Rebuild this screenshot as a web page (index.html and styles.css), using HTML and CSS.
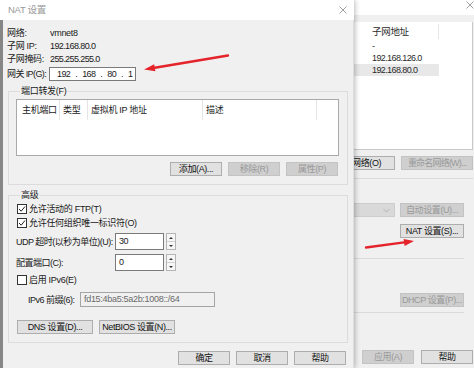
FILE: index.html
```html
<!DOCTYPE html>
<html lang="zh-CN">
<head>
    <meta charset="UTF-8">
    <meta name="viewport" content="width=device-width, initial-scale=1.0">
    <title>NAT 设置</title>
    <link rel="stylesheet" href="styles.css">
</head>
<body>
    <div class="desk">
        <!-- Window behind: virtual network editor -->
        <div class="win back">
            <div class="back-title">
                <svg class="close" width="8" height="8" viewBox="0 0 8 8"><path d="M0.5 0.5 L7.5 7.5 M7.5 0.5 L0.5 7.5" stroke="#888" stroke-width="0.8"/></svg>
            </div>
            <div class="back-body">
                <div class="netlist">
                    <div class="nl-row nl-head"><span class="nl-c1"></span><span class="nl-c2">子网地址</span></div>
                    <div class="nl-row"><span class="nl-c1"></span><span class="nl-c2">-</span></div>
                    <div class="nl-row"><span class="nl-c1"></span><span class="nl-c2 num">192.168.126.0</span></div>
                    <div class="nl-row sel"><span class="nl-c1"></span><span class="nl-c2 num">192.168.80.0</span></div>
                </div>
                <div class="row-end">
                    <button class="btn w-net">移除网络(O)</button>
                    <button class="btn off w-rename">重命名网络(W)...</button>
                </div>
                <div class="sep sep-full"></div>
                <div class="row-end combo-row">
                    <div class="combo">
                        <svg width="7" height="5" viewBox="0 0 7 5"><path d="M0.5 1 L3.5 4 L6.5 1" fill="none" stroke="#aaa" stroke-width="0.8"/></svg>
                    </div>
                    <button class="btn off w-side">自动设置(U)...</button>
                </div>
                <div class="row-end nat-row">
                    <button class="btn w-side">NAT 设置(S)...</button>
                </div>
                <div class="sep sep-short sep-a"></div>
                <div class="row-end dhcp-row">
                    <button class="btn off w-side">DHCP 设置(P)...</button>
                </div>
                <div class="sep sep-short sep-b"></div>
                <div class="row-end back-foot">
                    <button class="btn off w-foot">应用(A)</button>
                    <button class="btn w-foot">帮助</button>
                </div>
            </div>
        </div>

        <!-- Front dialog: NAT settings -->
        <div class="win dlg">
            <div class="dlg-title">
                <span>NAT 设置</span>
                <svg class="close" width="8" height="8" viewBox="0 0 8 8"><path d="M0.5 0.5 L7.5 7.5 M7.5 0.5 L0.5 7.5" stroke="#888" stroke-width="0.8"/></svg>
            </div>
            <div class="dlg-body">
                <div class="info">
                    <span class="lbl">网络:</span><span>vmnet8</span>
                    <span class="lbl">子网 IP:</span><span class="num">192.168.80.0</span>
                    <span class="lbl">子网掩码:</span><span class="num">255.255.255.0</span>
                    <span class="lbl gw-lbl">网关 IP(G):</span>
                    <div class="ipbox num"><span>192</span><span>.</span><span>168</span><span>.</span><span>80</span><span>.</span><span>1</span></div>
                </div>

                <fieldset class="group pf">
                    <legend>端口转发(F)</legend>
                    <div class="plist">
                        <div class="pl-head">
                            <span>主机端口</span>
                            <span>类型</span>
                            <span>虚拟机 IP 地址</span>
                            <span>描述</span>
                        </div>
                    </div>
                    <div class="btn-row">
                        <button class="btn w-52">添加(A)...</button>
                        <button class="btn off w-52">移除(R)</button>
                        <button class="btn off w-52">属性(P)</button>
                    </div>
                </fieldset>

                <fieldset class="group adv">
                    <legend>高级</legend>
                    <div class="chk chk-1">
                        <span class="box"><svg width="8" height="8" viewBox="0 0 8 8"><path d="M1 4 L3.2 6.2 L7 1.5" fill="none" stroke="#222" stroke-width="1"/></svg></span>
                        <span>允许活动的 FTP(T)</span>
                    </div>
                    <div class="chk">
                        <span class="box"><svg width="8" height="8" viewBox="0 0 8 8"><path d="M1 4 L3.2 6.2 L7 1.5" fill="none" stroke="#222" stroke-width="1"/></svg></span>
                        <span>允许任何组织唯一标识符(O)</span>
                    </div>
                    <div class="field udp">
                        <span class="f-lbl">UDP 超时(以秒为单位)(U):</span>
                        <span class="spin-input num">30</span>
                        <span class="spin"><span class="up"></span><span class="dn"></span></span>
                    </div>
                    <div class="field port">
                        <span class="f-lbl">配置端口(C):</span>
                        <span class="spin-input num">0</span>
                        <span class="spin"><span class="up"></span><span class="dn"></span></span>
                    </div>
                    <div class="chk chk-v6">
                        <span class="box"></span>
                        <span>启用 IPv6(E)</span>
                    </div>
                    <div class="prefix">
                        <span class="p-lbl">IPv6 前缀(6):</span>
                        <span class="p-input">fd15:4ba5:5a2b:1008::/64</span>
                    </div>
                    <div class="btn-row left">
                        <button class="btn w-76">DNS 设置(D)...</button>
                        <button class="btn w-76">NetBIOS 设置(N)...</button>
                    </div>
                </fieldset>

                <div class="btn-row dlg-foot">
                    <button class="btn w-52">确定</button>
                    <button class="btn w-52">取消</button>
                    <button class="btn w-52">帮助</button>
                </div>
            </div>
        </div>

        <!-- Red annotation arrows -->
        <svg class="marks" width="474" height="368" viewBox="0 0 474 368">
            <line x1="228" y1="55.5" x2="154.8" y2="67.7" stroke="#e4232b" stroke-width="2.4" stroke-linecap="round"/>
            <polygon points="144,69.5 155.4,71.2 154.2,64.2" fill="#e4232b"/>
            <line x1="366" y1="247.5" x2="404.1" y2="242.4" stroke="#e4232b" stroke-width="2.4" stroke-linecap="round"/>
            <polygon points="414,241 404.6,245.9 403.6,238.9" fill="#e4232b"/>
        </svg>
    </div>
</body>
</html>
```

FILE: styles.css
```css
/* Two overlapping Windows dialogs */
body {
    margin: 0;
    padding: 0;
    background-color: #f0f0f0;
    font-family: "Liberation Sans", "Noto Sans CJK SC", sans-serif;
    font-size: 9px;
    line-height: 12px;
    letter-spacing: -0.3px;
    color: #1a1a1a;
}

.desk {
    position: relative;
    width: 474px;
    height: 368px;
    overflow: hidden;
}

.win {
    position: absolute;
    top: 0;
    background-color: #f0f0f0;
}

.num {
    letter-spacing: -0.6px;
}

.close {
    display: block;
}

/* buttons */
.btn {
    box-sizing: border-box;
    height: 14px;
    padding: 0;
    border: 1px solid #adadad;
    background-color: #e1e1e1;
    color: #111;
    font-family: inherit;
    font-size: 9px;
    line-height: 12px;
    letter-spacing: -0.4px;
    text-align: center;
    white-space: nowrap;
    overflow: hidden;
}

.btn.off {
    background-color: #cfcfcf;
    border-color: #c3c3c3;
    color: #999;
}

.w-52 { width: 52px; }
.w-76 { width: 76px; }

/* ---------- back window ---------- */
.back {
    left: 230px;
    width: 248px;
    height: 368px;
}

.back-title {
    height: 15px;
    background-color: #fff;
    display: flex;
    justify-content: flex-end;
    padding-right: 4px;
}

.back-title .close {
    margin-top: 1px;
}

.back-body {
    padding: 7px 5px 0 10px;
}

.netlist {
    height: 128px;
    box-sizing: border-box;
    background-color: #fff;
    border: 1px solid #c8c8c8;
    border-left: none;
    border-top: none;
}

.nl-row {
    display: flex;
    height: 12px;
}

.nl-head {
    height: 18px;
    align-items: center;
}

.nl-c1 {
    width: 128px;
}

.nl-c2 {
    width: 71px;
    box-sizing: border-box;
    padding-left: 4px;
    color: #2a2a2a;
}

.nl-head .nl-c2 {
    height: 15px;
    line-height: 15px;
    border-right: 1px solid #e6e6e6;
    font-size: 9.5px;
}

.nl-row.sel .nl-c1,
.nl-row.sel .nl-c2 {
    background-color: #e8e8e8;
}

.row-end {
    display: flex;
    justify-content: flex-end;
    gap: 6px;
    margin-top: 6px;
}

.w-net { width: 74px; }
.w-rename { width: 72px; letter-spacing: -0.8px; }
.w-side { width: 64px; margin-right: 9px; }
.w-foot { width: 52px; }

.sep {
    border-top: 1px solid #dadada;
}

.sep-full { margin-top: 8px; }

.sep-short { margin-right: 9px; }
.sep-a { margin-top: 20px; }
.sep-b { margin-top: 5px; }

.combo-row {
    margin-top: 24px;
    gap: 5px;
}

.combo {
    box-sizing: border-box;
    width: 80px;
    height: 14px;
    background-color: #d9d9d9;
    border: 1px solid #cdcdcd;
    display: flex;
    align-items: center;
    justify-content: flex-end;
    padding-right: 4px;
}

.nat-row { margin-top: 7px; }
.dhcp-row { margin-top: 34px; }

.back-foot {
    margin-top: 37px;
    gap: 7px;
}

/* ---------- front dialog ---------- */
.dlg {
    left: 0;
    width: 354px;
    height: 368px;
    box-shadow: 1px 0 5px rgba(0, 0, 0, 0.28);
    z-index: 1;
}

.dlg-title {
    height: 20px;
    background-color: #fff;
    display: flex;
    align-items: center;
    justify-content: space-between;
    padding: 0 7px 0 8px;
    color: #9a9a9a;
    font-size: 9.5px;
}

.dlg-title .close {
    margin-top: -1px;
}

.dlg-body {
    height: 348px;
    box-sizing: border-box;
    border-left: 3px solid #868686;
    border-right: 1px solid #dedede;
    padding: 6px 5px 0 5px;
}

.info {
    display: grid;
    grid-template-columns: 43px auto;
    grid-auto-rows: 13px;
    align-items: center;
    margin-left: -1px;
}

.info .lbl {
    white-space: nowrap;
}

.info .gw-lbl {
    margin-top: 4px;
    letter-spacing: -0.6px;
}

.ipbox {
    box-sizing: border-box;
    width: 87px;
    height: 14px;
    margin: 4px 0 0 -1px;
    background-color: #fff;
    border: 1px solid #7a7a7a;
    display: flex;
    gap: 5px;
    padding-left: 7px;
    line-height: 12px;
}

/* group boxes */
.group {
    margin: 0;
    min-width: 0;
    border: 1px solid #dcdcdc;
}

.group legend {
    padding: 0 1px;
    margin-left: 4px;
    line-height: 12px;
    color: #1a1a1a;
}

.pf {
    margin-top: 7px;
    padding: 2px 8px 8px 7px;
}

.plist {
    height: 57px;
    box-sizing: border-box;
    background-color: #fff;
    border: 1px solid #a9a9a9;
}

.pl-head {
    display: grid;
    grid-template-columns: 43px 28px 115px 114px;
    height: 20px;
}

.pl-head span {
    border-right: 1px solid #e5e5e5;
    padding-left: 3px;
    line-height: 20px;
    white-space: nowrap;
}

.pl-head span:first-child {
    padding-left: 5px;
}

.btn-row {
    display: flex;
    justify-content: flex-end;
    gap: 6px;
    margin-top: 6px;
    padding-right: 1px;
}

.btn-row.left {
    justify-content: flex-start;
    margin-top: 13px;
    padding: 0 0 0 1px;
}

.adv {
    margin-top: 4px;
    padding: 1px 8px 8px 7px;
}

.chk {
    display: flex;
    align-items: center;
    height: 14px;
    gap: 2px;
}

.chk .box {
    box-sizing: border-box;
    width: 10px;
    height: 10px;
    margin-left: 1px;
    background-color: #fff;
    border: 1px solid #333;
    display: flex;
    align-items: center;
    justify-content: center;
}

.chk-v6 {
    margin-top: 2px;
}

.field {
    display: flex;
    align-items: center;
    height: 17px;
}

.udp { margin-top: 3px; }
.port { margin-top: 4px; }

.f-lbl {
    width: 99px;
    white-space: nowrap;
    letter-spacing: -0.5px;
}

.spin-input {
    box-sizing: border-box;
    width: 49px;
    height: 17px;
    background-color: #fff;
    border: 1px solid #7a7a7a;
    padding-left: 3px;
    line-height: 15px;
}

.spin {
    display: flex;
    flex-direction: column;
    margin-left: 2px;
    width: 10px;
    height: 17px;
    box-sizing: border-box;
    border: 1px solid #b5b5b5;
    background-color: #f6f6f6;
}

.spin span {
    flex: 1;
    display: flex;
    align-items: center;
    justify-content: center;
}

.spin .up { border-bottom: 1px solid #d0d0d0; }

.spin .up::before {
    content: "";
    border-left: 2px solid transparent;
    border-right: 2px solid transparent;
    border-bottom: 2px solid #333;
}

.spin .dn::before {
    content: "";
    border-left: 2px solid transparent;
    border-right: 2px solid transparent;
    border-top: 2px solid #333;
}

.prefix {
    display: flex;
    align-items: center;
    margin-top: 5px;
    height: 15px;
}

.p-lbl {
    width: 52px;
    margin-left: 12px;
    white-space: nowrap;
    letter-spacing: -0.5px;
}

.p-input {
    box-sizing: border-box;
    width: 135px;
    height: 15px;
    background-color: #f0f0f0;
    border: 1px solid #a5a5a5;
    padding-left: 3px;
    line-height: 13px;
    color: #6a6a6a;
}

.dlg-foot {
    margin-top: 8px;
    padding-right: 2px;
}

.marks {
    position: absolute;
    left: 0;
    top: 0;
    z-index: 2;
    pointer-events: none;
}
```
